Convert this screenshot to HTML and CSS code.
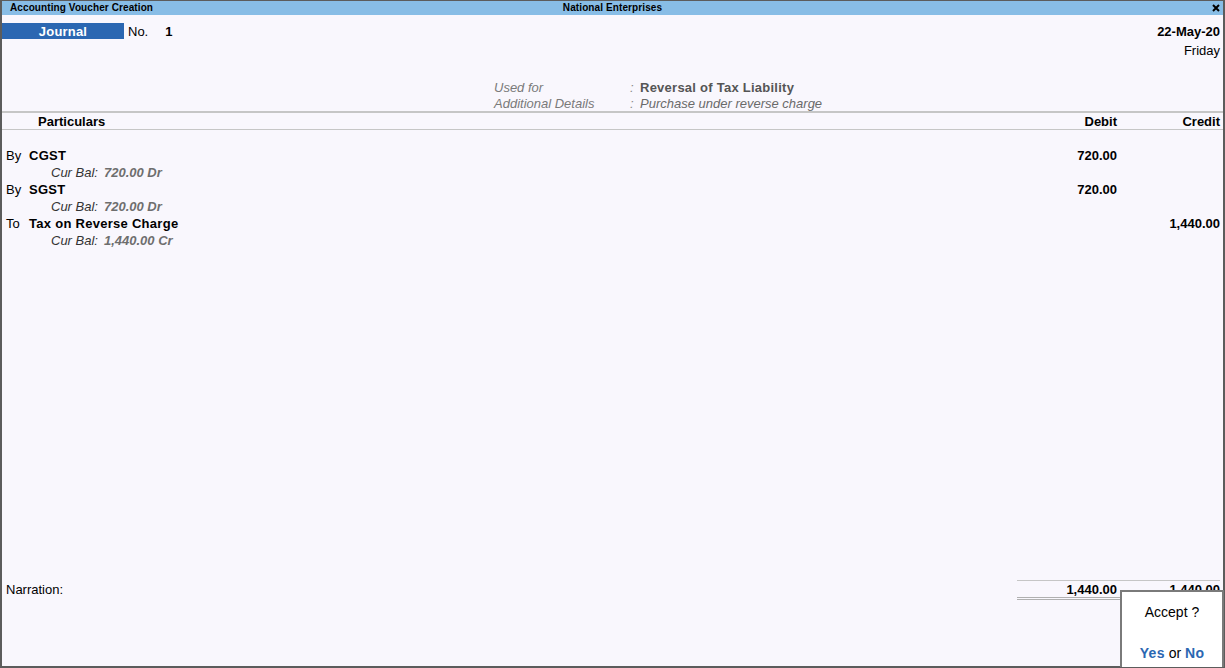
FILE: index.html
```html
<!DOCTYPE html>
<html lang="en">
<head>
    <meta charset="UTF-8">
    <title>Accounting Voucher Creation</title>
    <link rel="stylesheet" href="styles.css">
</head>
<body>
    <div class="window">
        <div class="titlebar">
            <span class="title-left">Accounting Voucher Creation</span>
            <span class="title-center">National Enterprises</span>
            <span class="title-right">
                <svg class="close" width="8" height="8" viewBox="0 0 8 8"><path d="M1 1L7 7M7 1L1 7" stroke="#000" stroke-width="2"/></svg>
            </span>
        </div>

        <div class="vhead">
            <div class="vtype">
                <span class="badge">Journal</span>
                <span class="no-label">No.</span>
                <span class="no-value">1</span>
            </div>
            <div class="vdate">
                <div class="date">22-May-20</div>
                <div class="day">Friday</div>
            </div>
        </div>

        <div class="usedfor">
            <div class="uf-row">
                <span class="uf-label">Used for</span>
                <span class="uf-colon">:</span>
                <span class="uf-value strong">Reversal of Tax Liability</span>
            </div>
            <div class="uf-row">
                <span class="uf-label">Additional Details</span>
                <span class="uf-colon">:</span>
                <span class="uf-value">Purchase under reverse charge</span>
            </div>
        </div>

        <div class="cols colhead">
            <span class="particulars">Particulars</span>
            <span class="amt">Debit</span>
            <span class="amt">Credit</span>
        </div>

        <div class="entries">
            <div class="cols entry">
                <span class="ledger"><span class="dc">By</span><b>CGST</b></span>
                <span class="amt">720.00</span>
                <span class="amt"></span>
            </div>
            <div class="curbal"><i>Cur Bal:</i><b>720.00 Dr</b></div>

            <div class="cols entry">
                <span class="ledger"><span class="dc">By</span><b>SGST</b></span>
                <span class="amt">720.00</span>
                <span class="amt"></span>
            </div>
            <div class="curbal"><i>Cur Bal:</i><b>720.00 Dr</b></div>

            <div class="cols entry">
                <span class="ledger"><span class="dc">To</span><b>Tax on Reverse Charge</b></span>
                <span class="amt"></span>
                <span class="amt">1,440.00</span>
            </div>
            <div class="curbal"><i>Cur Bal:</i><b>1,440.00 Cr</b></div>
        </div>

        <div class="footer">
            <div class="cols totals">
                <span class="narration">Narration:</span>
                <span class="amt total">1,440.00</span>
                <span class="amt total">1,440.00</span>
            </div>
        </div>

        <div class="accept">
            <div class="accept-q">Accept ?</div>
            <div class="accept-opts"><b>Yes</b> or <b>No</b></div>
        </div>
    </div>
</body>
</html>
```

FILE: styles.css
```css
* {
    box-sizing: border-box;
    margin: 0;
    padding: 0;
}

body {
    font-family: "Liberation Sans", Arial, sans-serif;
    font-size: 13px;
    color: #000;
    background: #5c5c5c;
}

.window {
    position: relative;
    width: 1225px;
    height: 668px;
    border: 2px solid #5c5c5c;
    border-top-width: 1px;
    background: #f9f7fd;
    display: flex;
    flex-direction: column;
}

.titlebar {
    height: 14px;
    background: #88bde6;
    display: grid;
    grid-template-columns: 1fr auto 1fr;
    align-items: center;
    font-size: 10px;
    font-weight: bold;
    line-height: 14px;
    letter-spacing: 0.1px;
}

.title-left {
    padding-left: 8px;
}

.title-right {
    display: flex;
    justify-content: flex-end;
    padding-right: 3px;
}

.close {
    display: block;
}

.vhead {
    display: flex;
    justify-content: space-between;
    padding-top: 8px;
    padding-right: 3px;
}

.vtype {
    display: flex;
    align-items: flex-start;
    height: 16px;
}

.vtype span {
    height: 16px;
    padding-top: 1px;
    line-height: 15px;
}

.badge {
    width: 122px;
    background: #2b67b2;
    color: #fff;
    font-weight: bold;
    text-align: center;
    letter-spacing: 0.2px;
}

.no-label {
    margin-left: 4px;
}

.no-value {
    margin-left: 17px;
    font-weight: bold;
}

.vdate {
    text-align: right;
    line-height: 16px;
    padding-top: 1px;
}

.date {
    font-weight: bold;
}

.day {
    margin-top: 3px;
}

.usedfor {
    margin-top: 20px;
    padding-left: 492px;
}

.uf-row {
    display: flex;
    height: 16px;
    padding-top: 1px;
    line-height: 15px;
}

.uf-label {
    width: 136px;
    color: #7a7a7a;
    font-style: italic;
}

.uf-colon {
    width: 10px;
    color: #8a8a8a;
    font-style: italic;
}

.uf-value {
    color: #6a6a6a;
    font-style: italic;
}

.uf-value.strong {
    color: #555;
    font-style: normal;
    font-weight: bold;
    letter-spacing: 0.25px;
}

.cols {
    display: grid;
    grid-template-columns: 1fr 100px 103px;
    padding-right: 3px;
}

.amt {
    text-align: right;
    font-weight: bold;
}

.colhead {
    border-top: 2px solid #c6c6c6;
    border-bottom: 1px solid #c6c6c6;
    height: 19px;
    padding-top: 1px;
    line-height: 15px;
    font-weight: bold;
}

.particulars {
    padding-left: 36px;
}

.entries {
    flex: 1;
    padding-top: 17px;
    line-height: 17px;
}

.ledger {
    padding-left: 4px;
    display: flex;
}

.ledger b {
    letter-spacing: 0.28px;
}

.dc {
    width: 23px;
}

.curbal {
    padding-left: 49px;
    color: #333;
}

.curbal b {
    margin-left: 6px;
    color: #6e6e6e;
    font-style: italic;
}

.footer {
    height: 86px;
}

.totals {
    line-height: 16px;
}

.narration {
    padding-left: 4px;
    padding-top: 2px;
}

.total {
    border-top: 1px solid #c6c6c6;
    border-bottom: 3px double #b0b0b0;
    padding-top: 1px;
    height: 20px;
}

.accept {
    position: absolute;
    left: 1118px;
    top: 589px;
    width: 104px;
    height: 77px;
    background: #fff;
    border: 2px solid #7a7a7a;
    border-bottom: none;
    text-align: center;
}

.accept-q {
    margin-top: 12px;
    font-size: 14px;
    line-height: 16px;
}

.accept-opts {
    margin-top: 25px;
    font-size: 14px;
    line-height: 16px;
}

.accept-opts b {
    color: #2b67b2;
    letter-spacing: 0.3px;
}
```
